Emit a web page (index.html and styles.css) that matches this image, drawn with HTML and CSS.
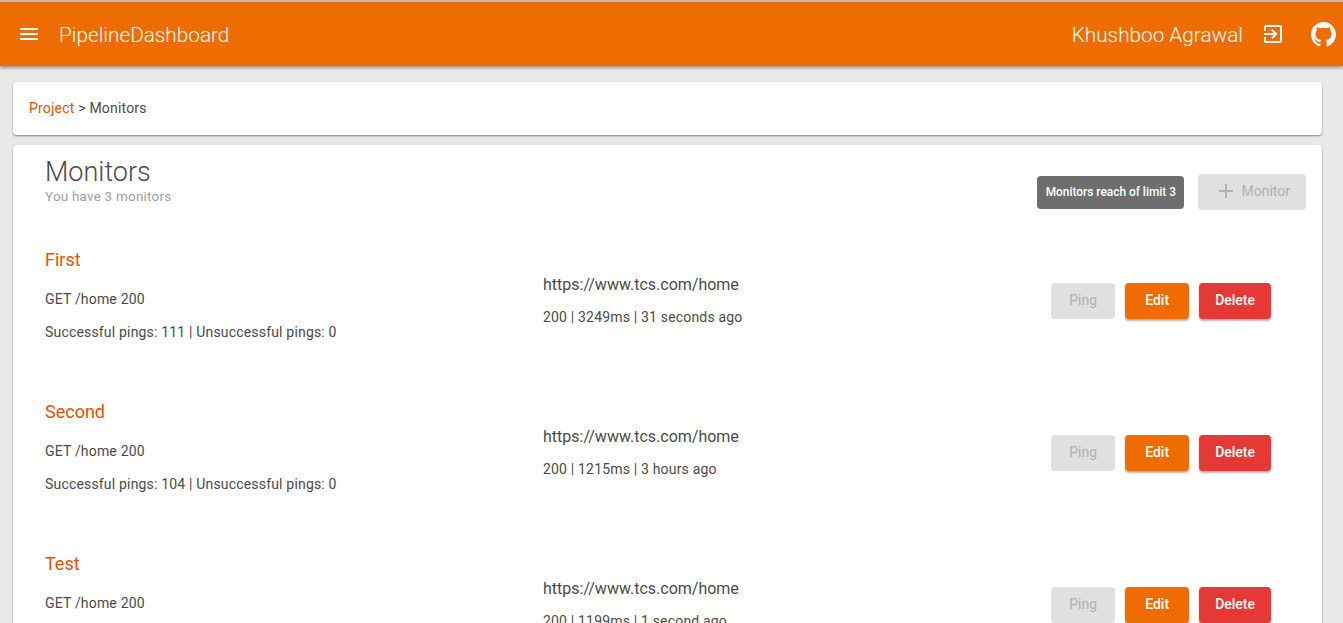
FILE: index.html
```html
<!DOCTYPE html>
<html lang="en">
<head>
    <meta charset="UTF-8">
    <meta name="viewport" content="width=device-width, initial-scale=1.0">
    <title>PipelineDashboard</title>
    <link rel="stylesheet" href="styles.css">
</head>
<body>

    <header class="toolbar">
        <svg class="menu-icon" viewBox="0 0 24 24" width="24" height="24"><path d="M3 18h18v-2H3v2zm0-5h18v-2H3v2zm0-7v2h18V6H3z"/></svg>
        <span class="brand">PipelineDashboard</span>
        <span class="spacer"></span>
        <span class="user">Khushboo Agrawal</span>
        <svg class="login-icon" viewBox="0 0 24 24" width="24" height="24"><path d="M10.09 15.59L11.5 17l5-5-5-5-1.41 1.41L12.67 11H3v2h9.67l-2.58 2.59zM19 3H5c-1.11 0-2 .9-2 2v4h2V5h14v14H5v-4H3v4c0 1.1.89 2 2 2h14c1.1 0 2-.9 2-2V5c0-1.1-.9-2-2-2z"/></svg>
        <svg class="github-icon" viewBox="0 0 16 16" width="25" height="25"><path d="M8 0C3.58 0 0 3.58 0 8c0 3.54 2.29 6.53 5.47 7.59.4.07.55-.17.55-.38 0-.19-.01-.82-.01-1.49-2.01.37-2.53-.49-2.69-.94-.09-.23-.48-.94-.82-1.13-.28-.15-.68-.52-.01-.53.63-.01 1.08.58 1.23.82.72 1.21 1.87.87 2.33.66.07-.52.28-.87.51-1.07-1.78-.2-3.64-.89-3.64-3.95 0-.87.31-1.59.82-2.15-.08-.2-.36-1.02.08-2.12 0 0 .67-.21 2.2.82.64-.18 1.32-.27 2-.27s1.36.09 2 .27c1.53-1.04 2.2-.82 2.2-.82.44 1.1.16 1.92.08 2.12.51.56.82 1.27.82 2.15 0 3.07-1.87 3.75-3.65 3.95.29.25.54.73.54 1.48 0 1.07-.01 1.93-.01 2.2 0 .21.15.46.55.38A8.01 8.01 0 0 0 16 8c0-4.42-3.58-8-8-8z"/></svg>
    </header>

    <main class="content">
        <div class="card breadcrumb">
            <a href="#">Project</a> &gt; Monitors
        </div>

        <section class="card monitors">
            <div class="monitors-head">
                <div class="monitors-title">
                    <h1>Monitors</h1>
                    <p>You have 3 monitors</p>
                </div>
                <span class="limit-tip">Monitors reach of limit 3</span>
                <button class="btn btn-disabled btn-add">
                    <svg viewBox="0 0 24 24" width="24" height="24"><path d="M19 13h-6v6h-2v-6H5v-2h6V5h2v6h6v2z"/></svg>
                    Monitor
                </button>
            </div>

            <div class="monitor">
                <div class="monitor-info">
                    <h2>First</h2>
                    <p>GET /home 200</p>
                    <p>Successful pings: 111 | Unsuccessful pings: 0</p>
                </div>
                <div class="monitor-url">
                    <h3>https://www.tcs.com/home</h3>
                    <p>200 | 3249ms | 31 seconds ago</p>
                </div>
                <div class="monitor-actions">
                    <button class="btn btn-disabled">Ping</button>
                    <button class="btn btn-edit">Edit</button>
                    <button class="btn btn-delete">Delete</button>
                </div>
            </div>

            <div class="monitor">
                <div class="monitor-info">
                    <h2>Second</h2>
                    <p>GET /home 200</p>
                    <p>Successful pings: 104 | Unsuccessful pings: 0</p>
                </div>
                <div class="monitor-url">
                    <h3>https://www.tcs.com/home</h3>
                    <p>200 | 1215ms | 3 hours ago</p>
                </div>
                <div class="monitor-actions">
                    <button class="btn btn-disabled">Ping</button>
                    <button class="btn btn-edit">Edit</button>
                    <button class="btn btn-delete">Delete</button>
                </div>
            </div>

            <div class="monitor">
                <div class="monitor-info">
                    <h2>Test</h2>
                    <p>GET /home 200</p>
                    <p>Successful pings: 98 | Unsuccessful pings: 0</p>
                </div>
                <div class="monitor-url">
                    <h3>https://www.tcs.com/home</h3>
                    <p>200 | 1199ms | 1 second ago</p>
                </div>
                <div class="monitor-actions">
                    <button class="btn btn-disabled">Ping</button>
                    <button class="btn btn-edit">Edit</button>
                    <button class="btn btn-delete">Delete</button>
                </div>
            </div>
        </section>
    </main>

</body>
</html>
```

FILE: styles.css
```css
html, body {
    height: 623px;
    overflow: hidden;
}

body {
    font-family: Roboto, sans-serif;
    margin: 0;
    padding: 0;
    background-color: #e9e9e9;
    color: #4a4a4a;
}

.toolbar {
    display: flex;
    align-items: center;
    height: 64px;
    border-top: 2px solid #bdbdbd;
    padding: 0 7px 0 17px;
    background-color: #ef6c00;
    color: white;
    box-shadow: 0 2px 3px rgba(0, 0, 0, 0.35);
    fill: white;
}

.brand {
    margin: 1px 0 0 18px;
    font-size: 20.75px;
    font-weight: 300;
}

.spacer {
    flex: 1;
}

.user {
    margin-top: 1px;
    font-size: 20.75px;
    font-weight: 300;
}

.login-icon {
    margin-left: 18px;
}

.github-icon {
    margin-left: 26px;
}

.content {
    padding: 16px 21px 0 13px;
}

.card {
    background-color: white;
    border-radius: 4px;
    box-shadow: 0 1px 2px rgba(0, 0, 0, 0.45);
}

.breadcrumb {
    height: 53px;
    padding-left: 16px;
    line-height: 53px;
    font-size: 14px;
    letter-spacing: 0.2px;
}

.breadcrumb a {
    color: #e65100;
    text-decoration: none;
}

.monitors {
    margin-top: 10px;
    padding: 0 16px 0 32px;
}

.monitors-head {
    display: flex;
    align-items: center;
    height: 70px;
}

.monitors-title {
    flex: 1;
}

.monitors-title h1 {
    margin: 0;
    font-size: 27px;
    font-weight: 300;
    line-height: 32px;
}

.monitors-title p {
    margin: 0;
    font-size: 13.5px;
    line-height: 16px;
    letter-spacing: 0.2px;
    color: #9e9e9e;
}

.limit-tip {
    margin-top: 24px;
    padding: 0 8.5px;
    height: 33px;
    line-height: 33px;
    border-radius: 4px;
    font-size: 11.9px;
    font-weight: 500;
    color: white;
    background-color: #6e6e6e;
}

.btn {
    height: 36px;
    border: none;
    border-radius: 4px;
    padding: 0 16px 2px;
    font-family: Roboto, sans-serif;
    font-size: 14px;
    font-weight: 500;
    color: white;
    min-width: 64px;
}

.btn-disabled {
    background-color: #e0e0e0;
    color: #b0b0b0;
    font-weight: 400;
}

.btn-add {
    display: flex;
    align-items: center;
    gap: 3px;
    margin: 24px 0 0 14px;
    padding: 0 16px 2px;
    fill: #b0b0b0;
}

.btn-edit {
    background-color: #ef6c00;
    box-shadow: 0 2px 2px rgba(0, 0, 0, 0.3);
}

.btn-delete {
    background-color: #e53935;
    box-shadow: 0 2px 2px rgba(0, 0, 0, 0.3);
}

.monitor {
    display: flex;
    align-items: flex-start;
    height: 152px;
}

.monitor-info {
    width: 498px;
}

.monitor h2 {
    margin: 33px 0 0;
    font-size: 18px;
    font-weight: 400;
    line-height: 24px;
    color: #e65100;
}

.monitor p {
    margin: 0;
    font-size: 14px;
    line-height: 33px;
    letter-spacing: 0.18px;
}

.monitor-info h2 + p {
    margin-top: 11px;
}

.monitor-url {
    flex: 1;
    padding-top: 58px;
}

.monitor h3 {
    margin: 0 0 4px;
    font-size: 16px;
    font-weight: 400;
    line-height: 24px;
}

.monitor-actions {
    display: flex;
    gap: 10px;
    margin-top: 68px;
    padding-right: 35px;
}
```
